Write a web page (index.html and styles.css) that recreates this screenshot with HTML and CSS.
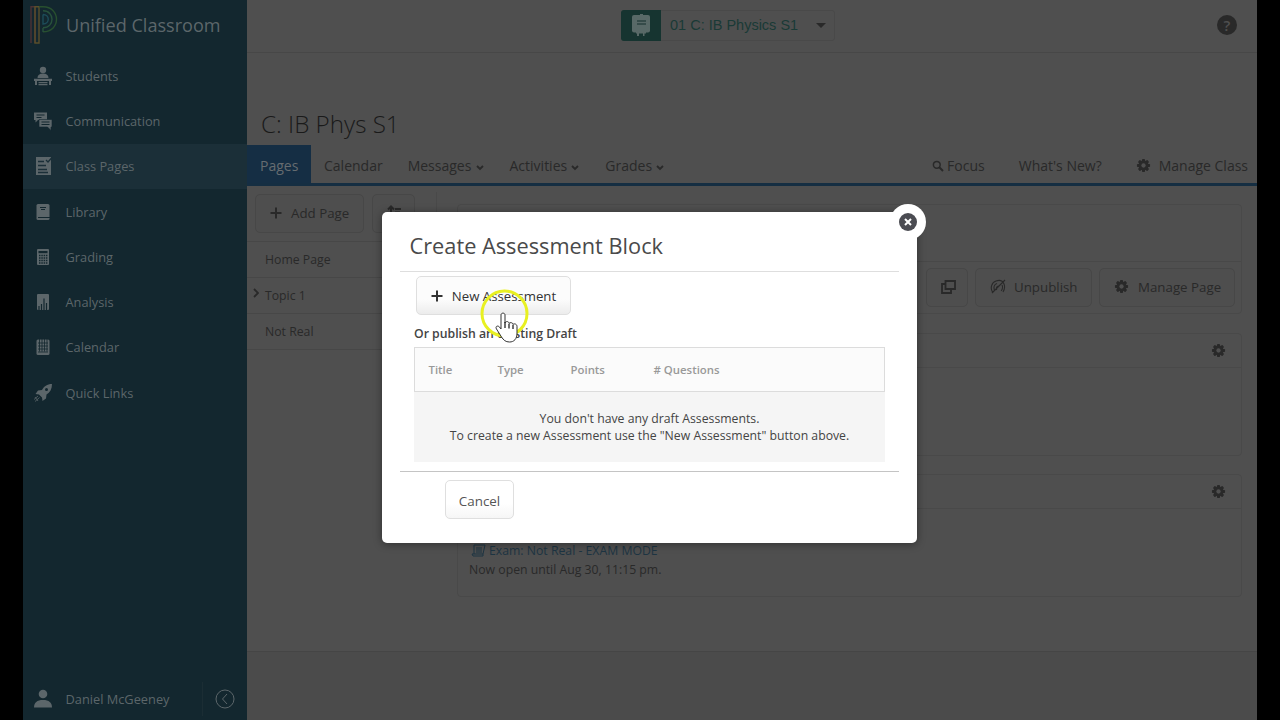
FILE: index.html
```html
<!DOCTYPE html>
<html lang="en">
  <head>
    <meta charset="UTF-8" />
    <meta name="viewport" content="width=device-width, initial-scale=1.0" />
    <title>Unified Classroom</title>
    <link rel="stylesheet" href="styles.css">
  </head>
  <body>
    <svg class="defs" width="0" height="0">
      <symbol id="gear" viewBox="0 0 16 16">
        <g fill="currentColor">
          <rect x="6.4" y="1" width="3.2" height="14" rx=".8" />
          <rect x="6.4" y="1" width="3.2" height="14" rx=".8" transform="rotate(45 8 8)" />
          <rect x="6.4" y="1" width="3.2" height="14" rx=".8" transform="rotate(90 8 8)" />
          <rect x="6.4" y="1" width="3.2" height="14" rx=".8" transform="rotate(135 8 8)" />
          <circle cx="8" cy="8" r="5.3" />
        </g>
        <circle cx="8" cy="8" r="2.3" fill="#4f4f4f" />
      </symbol>
      <symbol id="plus" viewBox="0 0 12 12">
        <path d="M6 .5v11M.5 6h11" stroke="currentColor" stroke-width="2" />
      </symbol>
      <symbol id="caret" viewBox="0 0 8 6">
        <path d="M1 1l3 3 3-3" fill="none" stroke="currentColor" stroke-width="1.8" />
      </symbol>
    </svg>

    <div class="screen">
      <nav class="sidebar">
        <div class="brand">
          <svg class="logo" width="28" height="38" viewBox="0 0 28 38" fill="none" stroke-width="1.4">
            <path d="M1 37V.8h4V37" stroke="#4c3235" />
            <path d="M5 .8V37h4V.8z" stroke="#5a4f2b" />
            <path d="M9 .8h4c18 0 18 25 0 25" stroke="#28502f" />
            <path d="M13 4.800c12 0 12 17 0 17M13 22v4" stroke="#28523c" />
            <path d="M13 8.500c7 0 7 9.500 0 9.500V8.500" stroke="#1d4c59" />
          </svg>
          <span>Unified Classroom</span>
        </div>
        <ul class="menu">
          <li>
            <svg width="20" height="20" viewBox="0 0 20 20" fill="currentColor"><circle cx="10" cy="4" r="3.200" /><path d="M4.500 12c0-3 2-4.500 5.500-4.500s5.500 1.500 5.500 4.500zM1 12.700h18v2.200h-1V19h-2v-4H4v4H2v-4.100H1zM5.500 16h9v1.200h-9zM5.500 18h9v1.200h-9z" /></svg>
            <span>Students</span>
          </li>
          <li>
            <svg width="20" height="20" viewBox="0 0 20 20"><path d="M1 1.500h13V9H5l-2.500 2.500V9H1z" fill="currentColor" /><path d="M3.500 4h8M3.500 6.500h5" stroke="#13272f" /><path d="M6 8.500h13V16h-1v3.500L14.500 16H6z" fill="currentColor" stroke="#13272f" stroke-width=".6" /><path d="M8.500 11h8M8.500 13.500h8" stroke="#13272f" /></svg>
            <span>Communication</span>
          </li>
          <li class="active">
            <svg width="20" height="20" viewBox="0 0 20 20"><path d="M3 1h15v18H3z" fill="currentColor" /><path d="M5 5.500h6M5 9.500h8M5 13.500h9M5 16.500h10M13 4l2 2 4-4.500" fill="none" stroke="#1b2f38" stroke-width="1.300" /></svg>
            <span>Class Pages</span>
          </li>
          <li>
            <svg width="20" height="20" viewBox="0 0 20 20"><rect x="3.500" y="2" width="13" height="16" rx="1.500" fill="currentColor" /><path d="M7 5.500h6M8 7.500h4M5 15.500h12" stroke="#13272f" /></svg>
            <span>Library</span>
          </li>
          <li>
            <svg width="20" height="20" viewBox="0 0 20 20"><rect x="4" y="2" width="12" height="16" rx="1" fill="currentColor" /><path d="M5.500 4h9v2.200h-9z" fill="#13272f" /><path d="M6 8.500h8.500M6 11h8.500M6 13.500h8.500M6 16h8.500" stroke="#13272f" stroke-dasharray="1.500 .8" stroke-width="1.300" /></svg>
            <span>Grading</span>
          </li>
          <li>
            <svg width="20" height="20" viewBox="0 0 20 20"><rect x="4" y="2" width="12" height="16" rx="1" fill="currentColor" /><path d="M6 18v-4M8.500 18v-6M11 18V6.500M13.500 18v-7" stroke="#13272f" stroke-width="1.200" /></svg>
            <span>Analysis</span>
          </li>
          <li>
            <svg width="20" height="20" viewBox="0 0 20 20"><rect x="3.500" y="2.500" width="13" height="15.500" rx="1.500" fill="currentColor" /><path d="M5 6h10M5 9h10M5 12h10M5 15h10M6.500 1.500v13M9 1.500v13M11.500 1.500v13M14 1.500v13" stroke="#13272f" stroke-width=".8" /></svg>
            <span>Calendar</span>
          </li>
          <li>
            <svg width="20" height="20" viewBox="0 0 20 20"><path d="M19 1c-5 0-8 2.500-10 6l-4 .5L2.500 11l3.500.5 3 3 .5 3.500 3.500-2.500.5-4C17 9.500 19 6 19 1z" fill="currentColor" /><circle cx="13.500" cy="6.500" r="1.500" fill="#13272f" /><path d="M5 13l-4 3.500M6.500 14.500L2 18.500M2 14l3 4" stroke="currentColor" stroke-width=".8" /></svg>
            <span>Quick Links</span>
          </li>
        </ul>
        <div class="user">
          <svg width="20" height="20" viewBox="0 0 20 20" fill="currentColor"><circle cx="10" cy="5" r="4.300" /><path d="M1 18.500c0-5 3-7.500 9-7.500s9 2.500 9 7.500z" /></svg>
          <span class="user-name">Daniel McGeeney</span>
          <span class="collapse">
            <svg width="20" height="20" viewBox="0 0 20 20" fill="none" stroke="currentColor"><circle cx="10" cy="10" r="9" /><path d="M12 5L7.500 10l4.500 5" /></svg>
          </span>
        </div>
      </nav>

      <main class="main">
        <header class="topbar">
          <div class="class-picker">
            <span class="picker-icon">
              <svg width="20" height="24" viewBox="0 0 20 24"><path d="M9 1h3v1.500H9zM5 19h10v1.500h-1.500V23H12v-2.500H8V23H6v-2.500H5z" fill="#586967" /><rect x="1" y="2" width="18" height="17.500" rx="2" fill="#586967" /><path d="M6 8h9M6 11h9" stroke="#132f2c" /></svg>
            </span>
            <span class="picker-name">01 C: IB Physics S1</span>
            <span class="picker-arrow"></span>
          </div>
          <span class="help">?</span>
        </header>

        <h1>C: IB Phys S1</h1>

        <div class="tabs">
          <a class="tab current">Pages</a>
          <a class="tab">Calendar</a>
          <a class="tab">Messages <svg width="8" height="6"><use href="#caret" /></svg></a>
          <a class="tab">Activities <svg width="8" height="6"><use href="#caret" /></svg></a>
          <a class="tab">Grades <svg width="8" height="6"><use href="#caret" /></svg></a>
          <div class="tools">
            <a class="focus"><svg width="12" height="12" viewBox="0 0 12 12" fill="none" stroke="currentColor" stroke-width="1.500"><circle cx="4.800" cy="4.800" r="3.400" /><path d="M7.300 7.300L11 11" stroke-width="2" /></svg>Focus</a>
            <a>What's New?</a>
            <a class="manage"><svg width="15" height="15"><use href="#gear" /></svg>Manage Class</a>
          </div>
        </div>

        <div class="content">
          <aside class="pages">
            <div class="page-actions">
              <button class="dim-btn add"><svg width="12" height="12"><use href="#plus" /></svg>Add Page</button>
              <button class="dim-btn sort"><svg width="15" height="14" viewBox="0 0 15 14" fill="none" stroke="currentColor" stroke-width="2"><path d="M4 13V2M1 4.500L4 1.500l3 3M8 4h6M8 7.500h5M8 11h4" /></svg></button>
              <span class="divider"></span>
            </div>
            <ul class="page-list">
              <li>Home Page</li>
              <li><svg width="6" height="10" viewBox="0 0 6 10" fill="none" stroke="currentColor" stroke-width="1.800"><path d="M1 1l4 4-4 4" /></svg>Topic 1</li>
              <li>Not Real</li>
            </ul>
          </aside>
          <section class="blocks">
            <div class="block page-block">
              <div class="page-head"></div>
              <div class="page-buttons">
                <button class="dim-btn copy"><svg width="15" height="14" viewBox="0 0 15 14" fill="none" stroke="currentColor" stroke-width="1.800"><path d="M4.500 1h9.500v8H4.500zM4 4H1v9h9V9.500" /></svg></button>
                <button class="dim-btn unpublish"><svg width="16" height="15" viewBox="0 0 16 15" fill="none" stroke="currentColor" stroke-width="1.100"><path d="M2.500 13C0 9 1.500 3.500 6 2s7 .5 8 3 .8 5-1 8M4.800 12C3 8 4.500 5 7 4.500M12 6c1 2 .6 4-.8 6M6.700 11c-.7-2 0-4 1.800-4M2 14L15 1" /></svg>Unpublish</button>
                <button class="dim-btn manage-page"><svg width="15" height="15"><use href="#gear" /></svg>Manage Page</button>
              </div>
            </div>
            <div class="block second">
              <div class="block-head"><svg width="15" height="15"><use href="#gear" /></svg></div>
            </div>
            <div class="block third">
              <div class="block-head"><svg width="15" height="15"><use href="#gear" /></svg></div>
              <div class="exam">
                <a><svg width="15" height="13" viewBox="0 0 15 13" fill="none" stroke="currentColor"><path d="M3 1h11l-2 9M3 1v9M1 10h11v2H2zM5 4h6M5 6h6M5 8h6" /></svg>Exam: Not Real - EXAM MODE</a>
                <p>Now open until Aug 30, 11:15 pm.</p>
              </div>
            </div>
          </section>
        </div>
        <footer class="footer"></footer>
      </main>
    </div>

    <div class="modal">
      <button class="close"><svg width="18" height="18" viewBox="0 0 18 18"><circle cx="9" cy="9" r="9" fill="#4b4c52" /><path d="M6 6l6 6M12 6l-6 6" stroke="#fff" stroke-width="2" /></svg></button>
      <h2>Create Assessment Block</h2>
      <div class="modal-body">
        <button class="btn new"><svg width="12" height="12"><use href="#plus" /></svg>New Assessment</button>
        <h3>Or publish an existing Draft</h3>
        <div class="drafts">
          <div class="drafts-head">
            <span>Title</span>
            <span>Type</span>
            <span>Points</span>
            <span># Questions</span>
          </div>
          <div class="drafts-empty">
            You don't have any draft Assessments.<br />
            To create a new Assessment use the "New Assessment" button above.
          </div>
        </div>
      </div>
      <div class="modal-footer">
        <button class="btn cancel">Cancel</button>
      </div>
    </div>

    <div class="pointer">
      <svg width="50" height="58" viewBox="0 0 50 58">
        <circle cx="24.500" cy="24.500" r="22.500" fill="none" stroke="#e8f022" stroke-width="3" />
        <path d="M21 26c0-2.500 4-2.500 4 0v8c.5-2 4-2 4 .5 1-1.500 4-1 4 1 1-1.200 4-.7 4 2V44c0 6-3 9-7.500 9-4 0-6-2-8-5l-5-8c-1.500-2.500 1-4 3-2l1.500 2z" fill="#fff" stroke="#333" />
        <path d="M25 33v6M29 35v4.500M33 36v4" stroke="#222" stroke-width="1.300" />
      </svg>
    </div>
  </body>
</html>
```
FILE: styles.css
```css
* {
  box-sizing: border-box;
}
body {
  margin: 0;
  height: 720px;
  overflow: hidden;
  background-color: #000;
  font-family: "Open Sans", "Noto Sans", sans-serif;
  font-size: 12.25px;
  color: #292929;
}
h1,
h2,
h3,
p,
ul {
  margin: 0;
  padding: 0;
}
ul {
  list-style: none;
}
button {
  font-family: inherit;
  white-space: nowrap;
  cursor: pointer;
}
svg {
  flex: none;
}
.defs {
  position: absolute;
}
.screen {
  display: flex;
  width: 1234px;
  height: 720px;
  margin-left: 23px;
}

/* sidebar */
.sidebar {
  display: flex;
  flex-direction: column;
  width: 224px;
  background-color: #13272f;
  font-size: 12.8px;
  color: #5c666a;
}
.brand {
  display: flex;
  align-items: center;
  gap: 8px;
  height: 53px;
  padding: 0 0 3px 7px;
  font-size: 18.1px;
}
.menu li {
  display: flex;
  align-items: center;
  gap: 12.5px;
  height: 45.3px;
  padding-left: 10px;
}
.menu .active {
  background-color: #1b2f38;
}
.user {
  display: flex;
  align-items: center;
  gap: 12.5px;
  height: 42px;
  margin-top: auto;
  padding-left: 10px;
}
.user-name {
  flex: 1;
}
.collapse {
  display: flex;
  align-items: center;
  justify-content: center;
  width: 45px;
  height: 34px;
  border-left: 1px solid #1b2d34;
}

/* main column */
.main {
  display: flex;
  flex-direction: column;
  flex: 1;
  background-color: #4f4f4f;
}
.topbar {
  display: flex;
  align-items: center;
  height: 53px;
  padding: 0 20px 2px 374px;
  border-bottom: 1px solid #474747;
}
.class-picker {
  display: flex;
  align-items: center;
  width: 214px;
  height: 31px;
  border: 1px solid #494949;
  border-radius: 3px;
  font-family: "Liberation Sans", Arial, sans-serif;
  font-size: 14.5px;
  color: #1a3a36;
}
.picker-icon {
  display: flex;
  align-items: center;
  justify-content: center;
  width: 40px;
  height: 31px;
  margin-left: -1px;
  border-radius: 3px 0 0 3px;
  background-color: #163430;
}
.picker-name {
  width: 155px;
  padding-left: 9px;
}
.picker-arrow {
  border: 5px solid transparent;
  border-top-color: #292929;
  border-bottom: 0;
}
.help {
  width: 20px;
  height: 20px;
  margin-left: auto;
  border-radius: 50%;
  background-color: #292929;
  color: #4f4f4f;
  font-size: 15px;
  font-weight: 600;
  line-height: 20px;
  text-align: center;
}
h1 {
  height: 92px;
  padding: 54px 0 0 14px;
  font-size: 24.2px;
  font-weight: 300;
  line-height: 34px;
  color: #1a1a1a;
}
.tabs {
  display: flex;
  height: 41px;
  border-bottom: 3px solid #152e42;
  font-size: 14px;
  line-height: 41px;
}
.tab {
  padding: 0 12px 0 13px;
  white-space: nowrap;
}
.tab svg {
  margin: 0 1px 0 0.5px;
}
.tab.current {
  width: 64px;
  background-color: #152e44;
  color: #666c70;
}
.tools {
  display: flex;
  gap: 34px;
  margin-left: auto;
  padding-right: 9px;
}
.focus svg {
  margin-right: 3px;
  vertical-align: -1px;
}
.manage svg {
  margin-right: 8px;
  vertical-align: -1.5px;
}
.content {
  display: flex;
  height: 465px;
}
.pages {
  width: 190px;
}
.page-actions {
  display: flex;
  gap: 8px;
  height: 55px;
  padding: 8px 0 0 8px;
}
.dim-btn {
  display: flex;
  align-items: center;
  height: 39px;
  padding: 0 14px;
  border: 1px solid #474747;
  border-radius: 5px;
  background-color: #4e4e4e;
  font-size: 13.3px;
  color: #292929;
}
.add {
  gap: 9px;
  width: 109px;
  padding-bottom: 2px;
}
.sort {
  width: 43px;
  padding-bottom: 4px;
}
.divider {
  height: 47px;
  margin: -2px 0 0 13px;
  border-left: 1px solid #494949;
}
.page-list li {
  display: flex;
  align-items: center;
  height: 36px;
  padding: 0 0 1px 18px;
  border-top: 1px solid #474747;
}
.page-list li:last-child {
  height: 37px;
  border-bottom: 1px solid #474747;
}
.page-list svg {
  margin: 0 6px 4px -12px;
}
.blocks {
  flex: 1;
  padding: 18px 15px 0 20px;
}
.block {
  border: 1px solid #494949;
  border-radius: 4px;
}
.page-block {
  height: 110px;
  margin-bottom: 19px;
}
.page-head {
  height: 57px;
  border-bottom: 1px solid #484848;
}
.page-buttons {
  display: flex;
  justify-content: flex-end;
  gap: 7px;
  padding: 6px 6px 7px;
}
.page-buttons .dim-btn {
  padding-bottom: 2px;
}
.copy {
  width: 42px;
}
.unpublish {
  gap: 8px;
  width: 117px;
}
.manage-page {
  gap: 9px;
  width: 136px;
}
.second {
  height: 123px;
  margin-bottom: 18px;
}
.third {
  height: 123px;
}
.block-head {
  display: flex;
  align-items: center;
  justify-content: flex-end;
  height: 34px;
  padding-right: 15px;
  border-bottom: 1px solid #494949;
}
.exam {
  padding: 32px 0 0 11px;
  line-height: 19px;
}
.exam a {
  display: flex;
  align-items: center;
  gap: 3px;
  padding-left: 2px;
  color: #1d3442;
}
.footer {
  flex: 1;
  border-top: 1px solid #454545;
  background-color: #4b4b4b;
}

/* dialog */
.modal {
  position: absolute;
  left: 382px;
  top: 212px;
  width: 535px;
  height: 331px;
  padding: 0 18px;
  border-radius: 5px;
  background-color: #fff;
  box-shadow: 0 1px 8px rgba(0, 0, 0, 0.4);
}
.close {
  position: absolute;
  right: -9px;
  top: -8px;
  display: flex;
  align-items: center;
  justify-content: center;
  width: 36px;
  height: 36px;
  padding: 0;
  border: none;
  border-radius: 50%;
  background-color: #fff;
}
h2 {
  height: 60px;
  padding: 10px 0 0 9.5px;
  border-bottom: 1px solid #dedede;
  font-size: 21.75px;
  font-weight: normal;
  line-height: 48px;
  color: #4a4a4a;
}
.modal-body {
  height: 200px;
  padding: 4px 14px 0;
  border-bottom: 1px solid #c4c4c4;
}
.btn {
  display: flex;
  align-items: center;
  justify-content: center;
  height: 39px;
  padding: 0;
  border: 1px solid #dfdfdf;
  border-radius: 5px;
  background: linear-gradient(#fcfcfc 60%, #ececec);
  font-size: 13.2px;
  color: #333;
}
.new {
  gap: 9px;
  width: 155px;
  margin-left: 2px;
}
h3 {
  height: 32px;
  font-size: 12.25px;
  font-weight: 600;
  line-height: 37px;
  color: #444;
}
.drafts {
  height: 115px;
}
.drafts-head {
  display: grid;
  grid-template-columns: 69px 73px 83px 1fr;
  align-items: center;
  height: 45px;
  padding-left: 13.5px;
  border: 1px solid #dcdcdc;
  background-color: #fbfbfb;
  font-size: 11.4px;
  font-weight: 600;
  color: #999;
}
.drafts-empty {
  height: 70px;
  padding-top: 18px;
  background-color: #f5f5f5;
  line-height: 17px;
  text-align: center;
  color: #444;
}
.modal-footer {
  padding: 8px 0 0 45px;
}
.cancel {
  width: 69px;
  padding-top: 2px;
  background: linear-gradient(#fff 60%, #f6f6f6);
  font-size: 13.4px;
  color: #555;
}

/* mouse cursor with click ring */
.pointer {
  position: absolute;
  left: 480px;
  top: 289px;
  pointer-events: none;
}
```
